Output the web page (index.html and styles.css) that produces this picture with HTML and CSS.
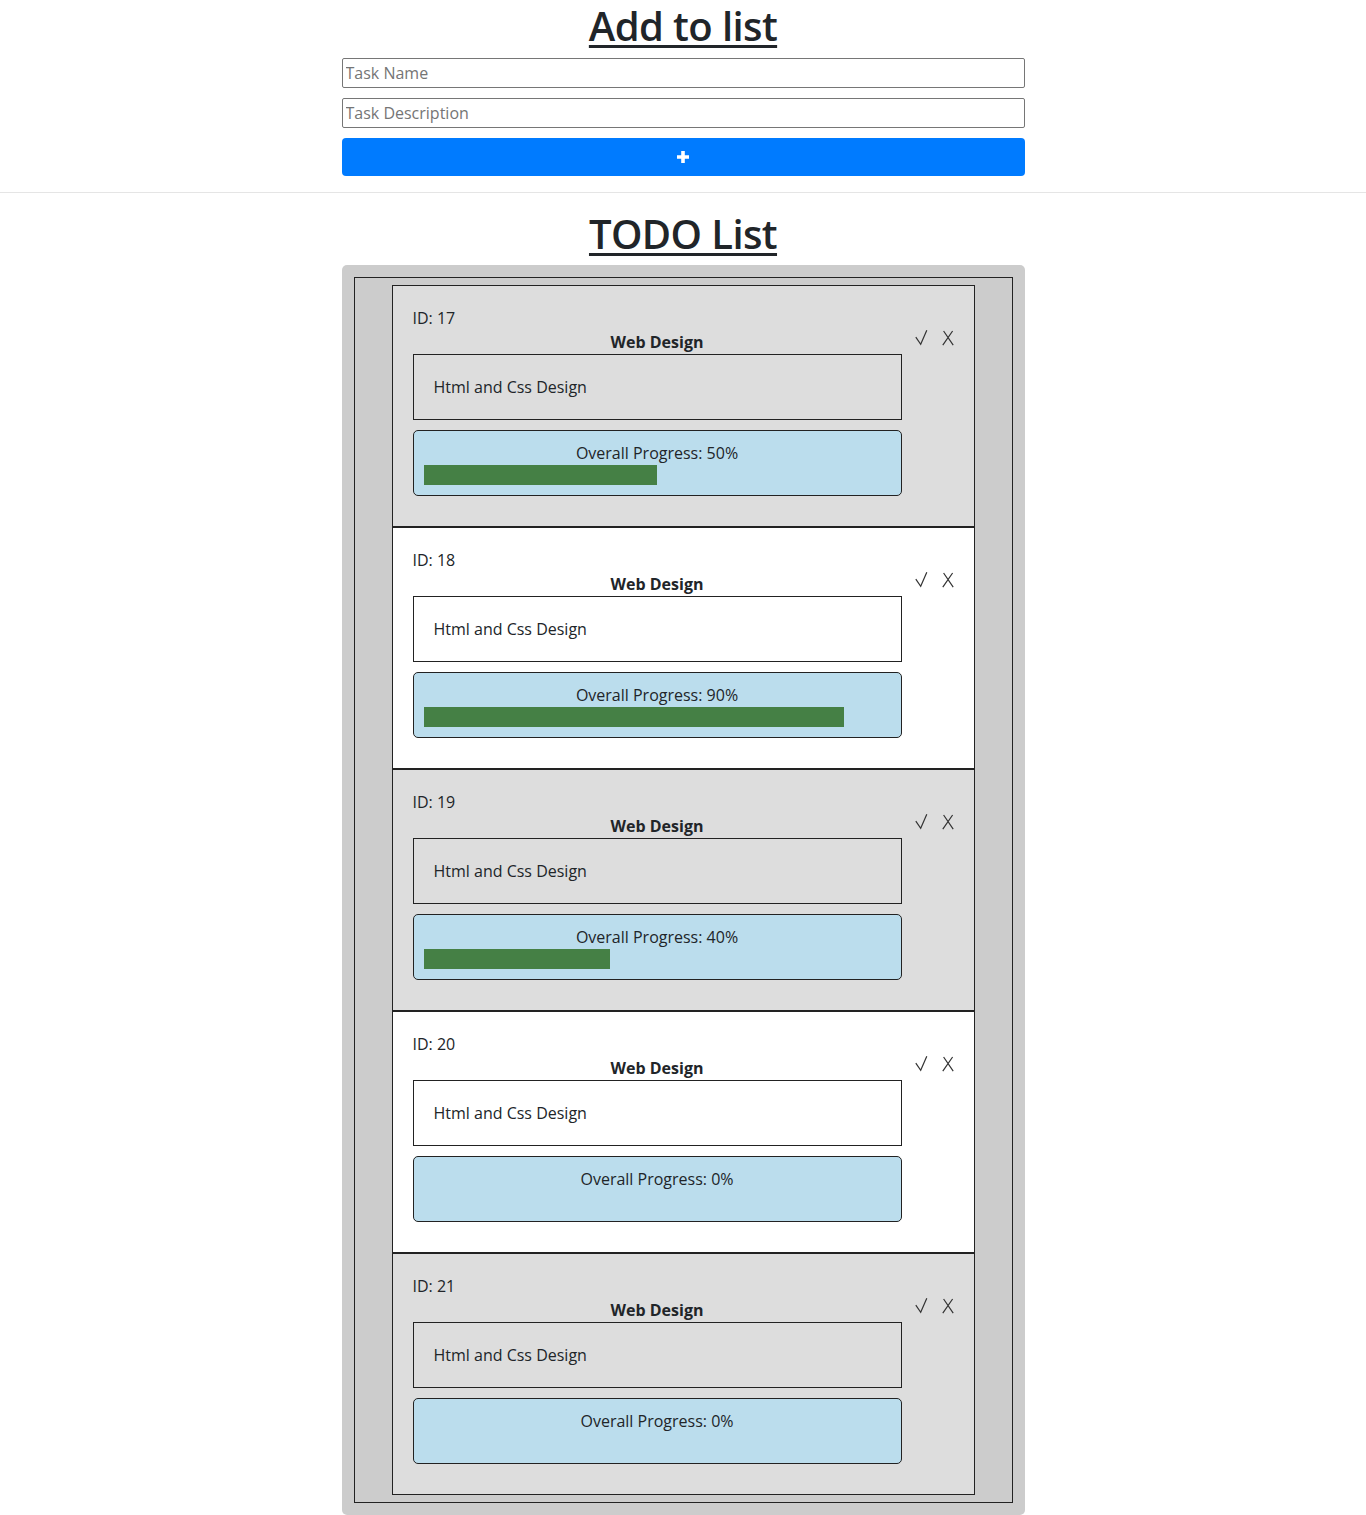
FILE: index.html
```html
<!DOCTYPE html>
<html lang="en">
<head>
<meta charset="utf-8">
<title>TODO List</title>
<link rel="stylesheet" href="styles.css">
</head>
<body>
<header class="add">
  <h1 class="heading">Add to list</h1>
  <form class="add-form">
    <input class="field" type="text" placeholder="Task Name">
    <input class="field" type="text" placeholder="Task Description">
    <button class="add-btn" type="button" aria-label="Add">
      <svg width="12" height="12" viewBox="0 0 12 12"><path d="M4.2 0h3.6v4.2H12v3.6H7.8V12H4.2V7.8H0V4.2h4.2z" fill="#fff"/></svg>
    </button>
  </form>
</header>
<hr class="divider">
<section class="todo">
  <h1 class="heading heading-todo">TODO List</h1>
  <div class="board">
    <ul class="list">
      <li class="item item-grey">
        <div class="item-main">
          <p class="item-id">ID: 17</p>
          <p class="item-title">Web Design</p>
          <div class="item-desc">Html and Css Design</div>
          <div class="progress">
            <p class="progress-label">Overall Progress: 50%</p>
            <div class="progress-track"><div class="progress-bar" style="width:50%"></div></div>
          </div>
        </div>
        <div class="item-actions">
          <svg class="icon" width="15" height="18" viewBox="0 0 15 18"><path d="M1.8 8.2L6.7 15.3L12.8 1.2" fill="none" stroke="#333" stroke-width="1.2"/></svg>
          <svg class="icon" width="15" height="18" viewBox="0 0 15 18"><path d="M3.6 2L13.2 16.2M12.6 2L2.8 16.2" fill="none" stroke="#333" stroke-width="1.2"/></svg>
        </div>
      </li>
      <li class="item">
        <div class="item-main">
          <p class="item-id">ID: 18</p>
          <p class="item-title">Web Design</p>
          <div class="item-desc">Html and Css Design</div>
          <div class="progress">
            <p class="progress-label">Overall Progress: 90%</p>
            <div class="progress-track"><div class="progress-bar" style="width:90%"></div></div>
          </div>
        </div>
        <div class="item-actions">
          <svg class="icon" width="15" height="18" viewBox="0 0 15 18"><path d="M1.8 8.2L6.7 15.3L12.8 1.2" fill="none" stroke="#333" stroke-width="1.2"/></svg>
          <svg class="icon" width="15" height="18" viewBox="0 0 15 18"><path d="M3.6 2L13.2 16.2M12.6 2L2.8 16.2" fill="none" stroke="#333" stroke-width="1.2"/></svg>
        </div>
      </li>
      <li class="item item-grey">
        <div class="item-main">
          <p class="item-id">ID: 19</p>
          <p class="item-title">Web Design</p>
          <div class="item-desc">Html and Css Design</div>
          <div class="progress">
            <p class="progress-label">Overall Progress: 40%</p>
            <div class="progress-track"><div class="progress-bar" style="width:40%"></div></div>
          </div>
        </div>
        <div class="item-actions">
          <svg class="icon" width="15" height="18" viewBox="0 0 15 18"><path d="M1.8 8.2L6.7 15.3L12.8 1.2" fill="none" stroke="#333" stroke-width="1.2"/></svg>
          <svg class="icon" width="15" height="18" viewBox="0 0 15 18"><path d="M3.6 2L13.2 16.2M12.6 2L2.8 16.2" fill="none" stroke="#333" stroke-width="1.2"/></svg>
        </div>
      </li>
      <li class="item">
        <div class="item-main">
          <p class="item-id">ID: 20</p>
          <p class="item-title">Web Design</p>
          <div class="item-desc">Html and Css Design</div>
          <div class="progress">
            <p class="progress-label">Overall Progress: 0%</p>
            <div class="progress-track"><div class="progress-bar" style="width:0%"></div></div>
          </div>
        </div>
        <div class="item-actions">
          <svg class="icon" width="15" height="18" viewBox="0 0 15 18"><path d="M1.8 8.2L6.7 15.3L12.8 1.2" fill="none" stroke="#333" stroke-width="1.2"/></svg>
          <svg class="icon" width="15" height="18" viewBox="0 0 15 18"><path d="M3.6 2L13.2 16.2M12.6 2L2.8 16.2" fill="none" stroke="#333" stroke-width="1.2"/></svg>
        </div>
      </li>
      <li class="item item-grey">
        <div class="item-main">
          <p class="item-id">ID: 21</p>
          <p class="item-title">Web Design</p>
          <div class="item-desc">Html and Css Design</div>
          <div class="progress">
            <p class="progress-label">Overall Progress: 0%</p>
            <div class="progress-track"><div class="progress-bar" style="width:0%"></div></div>
          </div>
        </div>
        <div class="item-actions">
          <svg class="icon" width="15" height="18" viewBox="0 0 15 18"><path d="M1.8 8.2L6.7 15.3L12.8 1.2" fill="none" stroke="#333" stroke-width="1.2"/></svg>
          <svg class="icon" width="15" height="18" viewBox="0 0 15 18"><path d="M3.6 2L13.2 16.2M12.6 2L2.8 16.2" fill="none" stroke="#333" stroke-width="1.2"/></svg>
        </div>
      </li>
    </ul>
  </div>
</section>
</body>
</html>
```
FILE: styles.css
```css
* { box-sizing: border-box; }

body {
  margin: 0;
  font-family: "Open Sans", "Noto Sans", "Liberation Sans", sans-serif;
  font-size: 16px;
  line-height: 24px;
  color: #212529;
  background: #fff;
}

.heading {
  margin: 0 0 8px;
  padding-top: 2px;
  font-size: 40px;
  line-height: 48px;
  font-weight: 600;
  letter-spacing: -0.6px;
  text-align: center;
  text-decoration: underline;
  text-decoration-thickness: 3px;
  text-underline-offset: 4px;
  color: #212529;
}

.add-form {
  width: 683px;
  margin: 0 auto;
  display: flex;
  flex-direction: column;
  gap: 10px;
}

.field {
  height: 30px;
  border: 1px solid #767676;
  border-radius: 2px;
  padding: 0 3px;
  font-family: inherit;
  font-size: 16px;
  color: #212529;
  background: #fff;
}

.field::placeholder { color: #757575; }

.add-btn {
  height: 38px;
  border: 0;
  border-radius: 4px;
  background: #007bff;
  display: flex;
  align-items: center;
  justify-content: center;
  padding: 0;
}

.divider {
  margin: 16px 0 15px;
  border: 0;
  border-top: 1px solid rgba(0, 0, 0, 0.1);
}

.heading-todo { margin-bottom: 7px; }

.board {
  width: 683px;
  margin: 0 auto;
  padding: 12px;
  background: #ccc;
  border-radius: 5px;
}

.list {
  list-style: none;
  margin: 0;
  padding: 7px 0;
  border: 1px solid #222;
}

.item {
  width: 583px;
  margin: 0 auto;
  border: 1px solid #222;
  padding: 20px 0 30px 20px;
  display: flex;
  background: #fff;
}

.item-grey { background: #ddd; }

.item-main {
  width: 489px;
  flex: none;
}

.item-id,
.item-title,
.progress-label {
  margin: 0;
}

.item-title {
  font-weight: 700;
  text-align: center;
}

.item-desc {
  border: 1px solid #222;
  padding: 20px;
}

.progress {
  margin-top: 10px;
  border: 1px solid #222;
  border-radius: 5px;
  background: #bbdded;
  padding: 10px;
  text-align: center;
}

.progress-track { height: 20px; }

.progress-bar {
  height: 20px;
  background: #458045;
}

.item-actions {
  display: flex;
  gap: 11px;
  padding: 0 0 0 12px;
  margin-top: 23px;
  align-items: flex-start;
}

.icon { display: block; }
```
